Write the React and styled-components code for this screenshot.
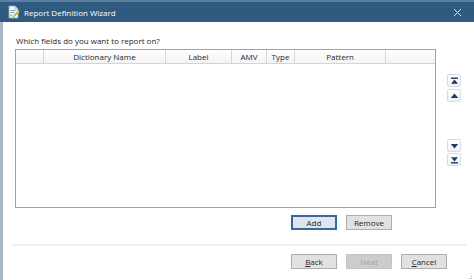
import React from 'react';
import styled, { createGlobalStyle } from 'styled-components';

const Global = createGlobalStyle`
    html, body {
        margin: 0;
        padding: 0;
        background: #ffffff;
    }
    body {
        font-family: "Open Sans", "Noto Sans", sans-serif;
        font-size: 8px;
        color: #262626;
    }
`;

const Window = styled.div`
    position: relative;
    width: 474px;
    height: 280px;
    display: flex;
    flex-direction: column;
    box-sizing: border-box;
    overflow: hidden;
    background: #ffffff;
`;

const TitleBar = styled.div`
    height: 22px;
    flex: none;
    display: flex;
    align-items: center;
    padding: 0 12px 0 8px;
    background: #2f5b80;
    border-top: 2px solid #5b7f9f;
    box-sizing: border-box;
    color: #ffffff;
    font-size: 8px;
    gap: 4px;
`;

const Title = styled.span`
    flex: 1;
    padding-top: 1px;
`;

const Body = styled.div`
    flex: 1;
    display: flex;
    flex-direction: column;
    border-left: 3px solid #a9b8c6;
    padding: 12px 8px 0 12px;
`;

const Prompt = styled.div`
    height: 14px;
    line-height: 14px;
    margin-left: 1px;
    margin-bottom: 1px;
`;

const Row = styled.div`
    display: flex;
    align-items: flex-start;
    gap: 11px;
`;

const Grid = styled.div`
    width: 421px;
    height: 159px;
    box-sizing: border-box;
    border: 1px solid #a3a3a3;
    background: #ffffff;
`;

const HeaderRow = styled.div`
    display: flex;
    height: 13px;
    border-bottom: 1px solid #d5d5d5;
    background: linear-gradient(#ffffff, #f4f4f4);
`;

const HeaderCell = styled.div`
    width: ${(p) => p.w}px;
    flex: ${(p) => (p.grow ? 1 : 'none')};
    box-sizing: border-box;
    border-right: ${(p) => (p.grow ? 'none' : '1px solid #d5d5d5')};
    text-align: center;
    line-height: 13px;
    white-space: nowrap;
    overflow: hidden;
`;

const Movers = styled.div`
    display: flex;
    flex-direction: column;
    margin-top: 25px;
`;

const MoveButton = styled.button`
    width: 14px;
    height: 13px;
    padding: 0;
    margin-bottom: ${(p) => p.gapAfter}px;
    border: 1px solid #d9dde2;
    border-radius: 2px;
    background: linear-gradient(#ffffff, #eef1f5);
    display: flex;
    align-items: center;
    justify-content: center;
`;

const ActionRow = styled.div`
    display: flex;
    gap: 9px;
    padding-left: 276px;
    margin-top: 7px;
`;

const Button = styled.button`
    width: 46px;
    height: 15px;
    padding: 0;
    box-sizing: border-box;
    font-family: inherit;
    font-size: 8px;
    line-height: 11px;
    color: ${(p) => (p.disabled ? '#a3a3a3' : '#262626')};
    background: ${(p) => (p.primary ? '#dde5ee' : p.disabled ? '#cccccc' : '#e1e1e1')};
    border: ${(p) => (p.primary ? '2px solid #39699a' : p.disabled ? '1px solid #c4c4c4' : '1px solid #adadad')};
`;

const Divider = styled.div`
    height: 2px;
    margin: 14px 0 8px -3px;
    background: #eeeeee;
`;

const NavRow = styled.div`
    display: flex;
    gap: 9px;
    padding-left: 276px;
`;

const Grip = styled.div`
    position: absolute;
    right: 1px;
    bottom: 1px;
    width: 6px;
    height: 6px;
`;

const Key = styled.u`
    text-decoration: underline;
`;

const Triangle = ({ dir, bar }) => (
    <svg width="9" height="8" viewBox="0 0 9 8">
        {dir === 'up' ? (
            <>
                {bar && <rect x="1" y="0.5" width="7" height="1.4" fill="#1f3864" />}
                <polygon points={bar ? '4.5,2.6 8,6.8 1,6.8' : '4.5,1.5 8.2,6 0.8,6'} fill="#1f3864" />
            </>
        ) : (
            <>
                <polygon points={bar ? '1,1.2 8,1.2 4.5,5.4' : '0.8,2 8.2,2 4.5,6.5'} fill="#1f3864" />
                {bar && <rect x="1" y="6.1" width="7" height="1.4" fill="#1f3864" />}
            </>
        )}
    </svg>
);

const WizardIcon = () => (
    <svg width="12" height="14" viewBox="0 0 12 14">
        <path d="M1 1h6l3 3v9H1z" fill="#f4f6f8" stroke="#9aa7b4" strokeWidth="0.8" />
        <path d="M7 1v3h3" fill="#d6dde4" stroke="#9aa7b4" strokeWidth="0.6" />
        <rect x="2.5" y="5" width="5" height="1" fill="#7f9cb8" />
        <rect x="2.5" y="7" width="4" height="1" fill="#7f9cb8" />
        <path d="M5 12l5-5" stroke="#8bbf3c" strokeWidth="1.6" />
        <circle cx="10" cy="7" r="1.4" fill="#f2c230" />
        <circle cx="3" cy="10.5" r="1" fill="#e8a33a" />
    </svg>
);

const CloseIcon = () => (
    <svg width="9" height="9" viewBox="0 0 9 9">
        <path d="M1 1l7 7M8 1l-7 7" stroke="#d7e1ea" strokeWidth="1" />
    </svg>
);

const columns = [
    { w: 28, label: '' },
    { w: 122, label: 'Dictionary Name' },
    { w: 66, label: 'Label' },
    { w: 35, label: 'AMV' },
    { w: 28, label: 'Type' },
    { w: 91, label: 'Pattern' },
    { w: 0, label: '', grow: true },
];

export default function App() {
    return (
        <>
            <Global />
            <Window>
                <TitleBar>
                    <WizardIcon />
                    <Title>Report Definition Wizard</Title>
                    <CloseIcon />
                </TitleBar>
                <Body>
                    <Prompt>Which fields do you want to report on?</Prompt>
                    <Row>
                        <Grid>
                            <HeaderRow>
                                {columns.map((c, i) => (
                                    <HeaderCell key={i} w={c.w} grow={c.grow}>
                                        {c.label}
                                    </HeaderCell>
                                ))}
                            </HeaderRow>
                        </Grid>
                        <Movers>
                            <MoveButton gapAfter={2}><Triangle dir="up" bar /></MoveButton>
                            <MoveButton gapAfter={37}><Triangle dir="up" /></MoveButton>
                            <MoveButton gapAfter={1}><Triangle dir="down" /></MoveButton>
                            <MoveButton gapAfter={0}><Triangle dir="down" bar /></MoveButton>
                        </Movers>
                    </Row>
                    <ActionRow>
                        <Button primary>Add</Button>
                        <Button>Remove</Button>
                    </ActionRow>
                    <Divider />
                    <NavRow>
                        <Button><Key>B</Key>ack</Button>
                        <Button disabled>Next</Button>
                        <Button><Key>C</Key>ancel</Button>
                    </NavRow>
                </Body>
                <Grip>
                    <svg width="6" height="6" viewBox="0 0 6 6">
                        <rect x="4" y="0" width="1" height="1" fill="#b0b0b0" />
                        <rect x="2" y="2" width="1" height="1" fill="#b0b0b0" />
                        <rect x="4" y="2" width="1" height="1" fill="#b0b0b0" />
                        <rect x="0" y="4" width="1" height="1" fill="#b0b0b0" />
                        <rect x="2" y="4" width="1" height="1" fill="#b0b0b0" />
                        <rect x="4" y="4" width="1" height="1" fill="#b0b0b0" />
                    </svg>
                </Grip>
            </Window>
        </>
    );
}
